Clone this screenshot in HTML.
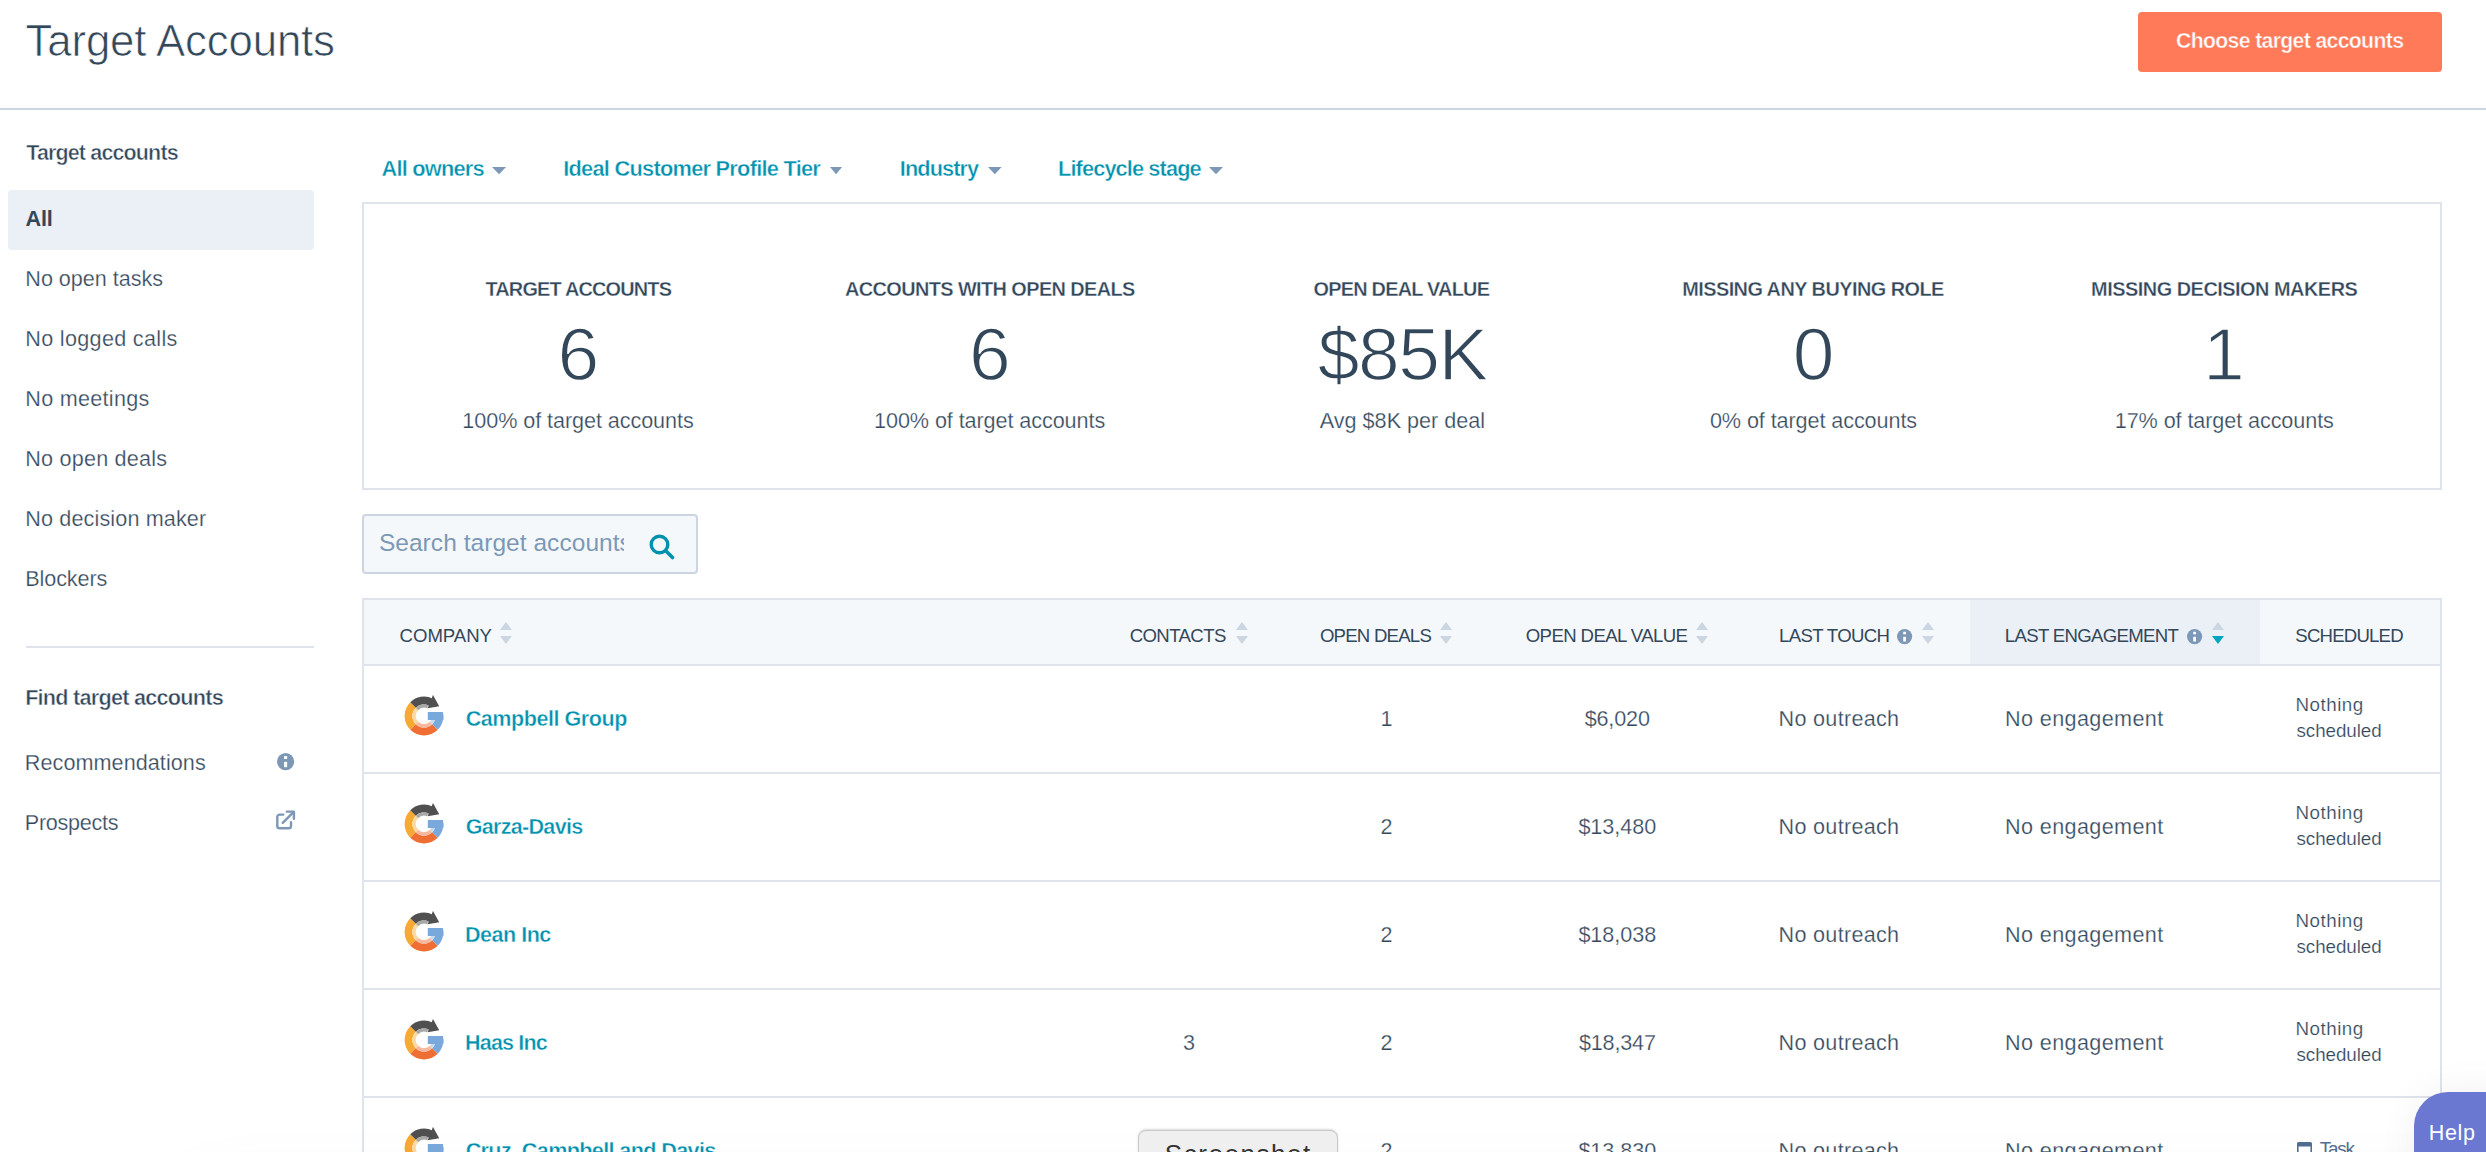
<!DOCTYPE html>
<html><head><meta charset="utf-8"><title>Target Accounts</title>
<style>
html,body{margin:0;padding:0;}
body{width:2486px;height:1152px;overflow:hidden;position:relative;background:#fff;font-family:"Liberation Sans",sans-serif;color:#33475b;}
.t{position:absolute;white-space:nowrap;}
.r{position:absolute;}
svg.r{overflow:visible;}
</style></head><body>
<div class="t" style="left:25.51px;top:18.72px;font-size:43.8px;line-height:43.8px;letter-spacing:-0.151px;color:#33475b;-webkit-text-stroke:0.7px #fff;">Target Accounts</div>
<div class="r" style="left:2138px;top:12px;width:304px;height:60px;background:#ff7a59;border-radius:4px;"></div>
<div class="t" style="left:2176.05px;top:30.35px;font-size:21.2px;line-height:21.2px;font-weight:700;letter-spacing:-0.642px;color:#ffffff;-webkit-text-stroke:0.4px #ff7a59;">Choose target accounts</div>
<div class="r" style="left:0px;top:108px;width:2486px;height:2px;background:#cbd6e2;"></div>
<div class="t" style="left:26.23px;top:142.80px;font-size:21.5px;line-height:21.5px;font-weight:700;letter-spacing:-0.860px;color:#33475b;-webkit-text-stroke:0.5px #fff;">Target accounts</div>
<div class="r" style="left:8px;top:190px;width:306px;height:60px;background:#eaf0f6;border-radius:4px;"></div>
<div class="t" style="left:25.46px;top:208.02px;font-size:21.6px;line-height:21.6px;font-weight:700;letter-spacing:-0.171px;color:#33475b;">All</div>
<div class="t" style="left:25.32px;top:267.92px;font-size:21.6px;line-height:21.6px;letter-spacing:-0.028px;color:#33475b;-webkit-text-stroke:0.25px #fff;">No open tasks</div>
<div class="t" style="left:25.32px;top:327.72px;font-size:21.6px;line-height:21.6px;letter-spacing:0.311px;color:#33475b;-webkit-text-stroke:0.25px #fff;">No logged calls</div>
<div class="t" style="left:25.32px;top:387.92px;font-size:21.6px;line-height:21.6px;letter-spacing:0.275px;color:#33475b;-webkit-text-stroke:0.25px #fff;">No meetings</div>
<div class="t" style="left:25.32px;top:447.72px;font-size:21.6px;line-height:21.6px;letter-spacing:0.201px;color:#33475b;-webkit-text-stroke:0.25px #fff;">No open deals</div>
<div class="t" style="left:25.32px;top:507.82px;font-size:21.6px;line-height:21.6px;letter-spacing:0.129px;color:#33475b;-webkit-text-stroke:0.25px #fff;">No decision maker</div>
<div class="t" style="left:25.32px;top:568.02px;font-size:21.6px;line-height:21.6px;letter-spacing:-0.114px;color:#33475b;-webkit-text-stroke:0.25px #fff;">Blockers</div>
<div class="r" style="left:26px;top:646px;width:288px;height:2px;background:#dfe3eb;"></div>
<div class="t" style="left:25.14px;top:686.93px;font-size:21.7px;line-height:21.7px;font-weight:700;letter-spacing:-0.770px;color:#33475b;-webkit-text-stroke:0.5px #fff;">Find target accounts</div>
<div class="t" style="left:24.82px;top:751.82px;font-size:21.6px;line-height:21.6px;letter-spacing:0.061px;color:#33475b;-webkit-text-stroke:0.25px #fff;">Recommendations</div>
<div class="t" style="left:24.82px;top:812.12px;font-size:21.6px;line-height:21.6px;letter-spacing:-0.291px;color:#33475b;-webkit-text-stroke:0.25px #fff;">Prospects</div>
<svg class="r" style="left:276.9px;top:752.6px" width="17.2" height="17.2" viewBox="0 0 20 20"><circle cx="10" cy="10" r="10" fill="#7c98b6"/><rect x="8.2" y="3.6" width="3.6" height="3.4" fill="#fff"/><rect x="8.2" y="10.3" width="3.6" height="6.2" fill="#fff"/></svg>
<svg class="r" style="left:275px;top:809px" width="21" height="21" viewBox="0 0 21 21" fill="none" stroke="#7c98b6" stroke-width="2.4" stroke-linecap="round" stroke-linejoin="round"><path d="M8.3 5.6 H4.6 a2.3 2.3 0 0 0 -2.3 2.3 V17 a2.3 2.3 0 0 0 2.3 2.3 H13.7 a2.3 2.3 0 0 0 2.3 -2.3 V13.2"/><path d="M7.7 13.9 L18.2 3.4"/><path d="M11.8 2.6 H18.9 V9.7"/></svg>
<div class="t" style="left:381.56px;top:158.45px;font-size:21.8px;line-height:21.8px;font-weight:700;letter-spacing:-0.798px;color:#0091ae;-webkit-text-stroke:0.4px #fff;">All owners</div>
<svg class="r" style="left:491.7px;top:167.2px" width="14.100000000000023" height="7.200000000000017" viewBox="0 0 14 7" preserveAspectRatio="none"><path d="M0 0 H14 L7 7 Z" fill="#7c98b6"/></svg>
<div class="t" style="left:563.23px;top:158.45px;font-size:21.8px;line-height:21.8px;font-weight:700;letter-spacing:-0.745px;color:#0091ae;-webkit-text-stroke:0.4px #fff;">Ideal Customer Profile Tier</div>
<svg class="r" style="left:829.6px;top:167.2px" width="12.100000000000023" height="7.200000000000017" viewBox="0 0 14 7" preserveAspectRatio="none"><path d="M0 0 H14 L7 7 Z" fill="#7c98b6"/></svg>
<div class="t" style="left:899.83px;top:158.45px;font-size:21.8px;line-height:21.8px;font-weight:700;letter-spacing:-0.960px;color:#0091ae;-webkit-text-stroke:0.4px #fff;">Industry</div>
<svg class="r" style="left:988px;top:167.2px" width="13.600000000000023" height="7.200000000000017" viewBox="0 0 14 7" preserveAspectRatio="none"><path d="M0 0 H14 L7 7 Z" fill="#7c98b6"/></svg>
<div class="t" style="left:1058.03px;top:158.45px;font-size:21.8px;line-height:21.8px;font-weight:700;letter-spacing:-0.902px;color:#0091ae;-webkit-text-stroke:0.4px #fff;">Lifecycle stage</div>
<svg class="r" style="left:1209px;top:167.2px" width="14" height="7.200000000000017" viewBox="0 0 14 7" preserveAspectRatio="none"><path d="M0 0 H14 L7 7 Z" fill="#7c98b6"/></svg>
<div class="r" style="left:362px;top:202px;width:2080px;height:288px;background:#ffffff;border:2px solid #dfe3eb;box-sizing:border-box;"></div>
<div class="t" style="left:485.45px;top:280.35px;font-size:19.9px;line-height:19.9px;font-weight:700;letter-spacing:-0.804px;color:#33475b;-webkit-text-stroke:0.3px #fff;">TARGET ACCOUNTS</div>
<div class="t" style="left:557.41px;top:317.31px;font-size:75px;line-height:75px;color:#33475b;-webkit-text-stroke:1.4px #fff;">6</div>
<div class="t" style="left:462.33px;top:409.72px;font-size:21.6px;line-height:21.6px;letter-spacing:-0.067px;color:#33475b;-webkit-text-stroke:0.25px #fff;">100% of target accounts</div>
<div class="t" style="left:844.95px;top:280.35px;font-size:19.9px;line-height:19.9px;font-weight:700;letter-spacing:-0.584px;color:#33475b;-webkit-text-stroke:0.3px #fff;">ACCOUNTS WITH OPEN DEALS</div>
<div class="t" style="left:969.01px;top:317.31px;font-size:75px;line-height:75px;color:#33475b;-webkit-text-stroke:1.4px #fff;">6</div>
<div class="t" style="left:874.08px;top:409.72px;font-size:21.6px;line-height:21.6px;letter-spacing:-0.081px;color:#33475b;-webkit-text-stroke:0.25px #fff;">100% of target accounts</div>
<div class="t" style="left:1313.55px;top:280.35px;font-size:19.9px;line-height:19.9px;font-weight:700;letter-spacing:-0.769px;color:#33475b;-webkit-text-stroke:0.3px #fff;">OPEN DEAL VALUE</div>
<div class="t" style="left:1317.70px;top:317.31px;font-size:75px;line-height:75px;letter-spacing:-1.413px;color:#33475b;-webkit-text-stroke:1.4px #fff;">$85K</div>
<div class="t" style="left:1319.80px;top:409.72px;font-size:21.6px;line-height:21.6px;color:#33475b;-webkit-text-stroke:0.25px #fff;">Avg $8K per deal</div>
<div class="t" style="left:1682.16px;top:280.35px;font-size:19.9px;line-height:19.9px;font-weight:700;letter-spacing:-0.540px;color:#33475b;-webkit-text-stroke:0.3px #fff;">MISSING ANY BUYING ROLE</div>
<div class="t" style="left:1792.69px;top:317.31px;font-size:75px;line-height:75px;color:#33475b;-webkit-text-stroke:1.4px #fff;">0</div>
<div class="t" style="left:1709.94px;top:409.72px;font-size:21.6px;line-height:21.6px;letter-spacing:-0.085px;color:#33475b;-webkit-text-stroke:0.25px #fff;">0% of target accounts</div>
<div class="t" style="left:2091.11px;top:280.35px;font-size:19.9px;line-height:19.9px;font-weight:700;letter-spacing:-0.487px;color:#33475b;-webkit-text-stroke:0.3px #fff;">MISSING DECISION MAKERS</div>
<div class="t" style="left:2202.96px;top:317.31px;font-size:75px;line-height:75px;color:#33475b;-webkit-text-stroke:1.4px #fff;">1</div>
<div class="t" style="left:2114.78px;top:409.72px;font-size:21.6px;line-height:21.6px;letter-spacing:-0.085px;color:#33475b;-webkit-text-stroke:0.25px #fff;">17% of target accounts</div>
<div class="r" style="left:362px;top:514px;width:336px;height:60px;background:#f5f8fa;border:2px solid #cbd6e2;border-radius:4px;box-sizing:border-box;"></div>
<div class="r" style="left:378px;top:520px;width:246px;height:48px;overflow:hidden">
<div class="t" style="left:0.90px;top:11.26px;font-size:24.5px;line-height:24.5px;letter-spacing:0.047px;color:#7c98b6;">Search target accounts</div>
</div>
<svg class="r" style="left:647.7px;top:532.8px" width="28" height="28" viewBox="0 0 28 28"><circle cx="11.5" cy="11.5" r="8.3" fill="none" stroke="#0091ae" stroke-width="3.4"/><path d="M18 18 L24.5 24.5" stroke="#0091ae" stroke-width="3.6" stroke-linecap="round"/></svg>
<div class="r" style="left:362px;top:598px;width:2080px;height:554px;background:#ffffff;border:2px solid #dfe3eb;border-bottom:none;box-sizing:border-box;"></div>
<div class="r" style="left:364px;top:600px;width:2076px;height:64px;background:#f5f8fa;"></div>
<div class="r" style="left:1970px;top:600px;width:290px;height:64px;background:#eaf0f6;"></div>
<div class="r" style="left:364px;top:664px;width:2076px;height:2px;background:#dfe3eb;"></div>
<div class="t" style="left:399.57px;top:627.06px;font-size:18.6px;line-height:18.6px;letter-spacing:-0.038px;color:#33475b;">COMPANY</div>
<svg class="r" style="left:500px;top:622px" width="12" height="22" viewBox="0 0 12 22"><path d="M6 0 L12 8 H0 Z" fill="#cbd6e2"/><path d="M0 14 H12 L6 22 Z" fill="#cbd6e2"/></svg>
<div class="t" style="left:1129.67px;top:627.06px;font-size:18.6px;line-height:18.6px;letter-spacing:-0.605px;color:#33475b;">CONTACTS</div>
<svg class="r" style="left:1235.5px;top:622px" width="12" height="22" viewBox="0 0 12 22"><path d="M6 0 L12 8 H0 Z" fill="#cbd6e2"/><path d="M0 14 H12 L6 22 Z" fill="#cbd6e2"/></svg>
<div class="t" style="left:1319.92px;top:627.06px;font-size:18.6px;line-height:18.6px;letter-spacing:-0.770px;color:#33475b;">OPEN DEALS</div>
<svg class="r" style="left:1440px;top:622px" width="12" height="22" viewBox="0 0 12 22"><path d="M6 0 L12 8 H0 Z" fill="#cbd6e2"/><path d="M0 14 H12 L6 22 Z" fill="#cbd6e2"/></svg>
<div class="t" style="left:1525.72px;top:627.06px;font-size:18.6px;line-height:18.6px;letter-spacing:-0.592px;color:#33475b;">OPEN DEAL VALUE</div>
<svg class="r" style="left:1696px;top:622px" width="12" height="22" viewBox="0 0 12 22"><path d="M6 0 L12 8 H0 Z" fill="#cbd6e2"/><path d="M0 14 H12 L6 22 Z" fill="#cbd6e2"/></svg>
<div class="t" style="left:1778.97px;top:627.06px;font-size:18.6px;line-height:18.6px;letter-spacing:-0.638px;color:#33475b;">LAST TOUCH</div>
<svg class="r" style="left:1896.9px;top:629.1999999999999px" width="15.2" height="15.2" viewBox="0 0 20 20"><circle cx="10" cy="10" r="10" fill="#7c98b6"/><rect x="8.2" y="3.6" width="3.6" height="3.4" fill="#fff"/><rect x="8.2" y="10.3" width="3.6" height="6.2" fill="#fff"/></svg>
<svg class="r" style="left:1922px;top:622px" width="12" height="22" viewBox="0 0 12 22"><path d="M6 0 L12 8 H0 Z" fill="#cbd6e2"/><path d="M0 14 H12 L6 22 Z" fill="#cbd6e2"/></svg>
<div class="t" style="left:2004.87px;top:627.06px;font-size:18.6px;line-height:18.6px;letter-spacing:-0.691px;color:#33475b;">LAST ENGAGEMENT</div>
<svg class="r" style="left:2186.7000000000003px;top:629.1999999999999px" width="15.2" height="15.2" viewBox="0 0 20 20"><circle cx="10" cy="10" r="10" fill="#7c98b6"/><rect x="8.2" y="3.6" width="3.6" height="3.4" fill="#fff"/><rect x="8.2" y="10.3" width="3.6" height="6.2" fill="#fff"/></svg>
<svg class="r" style="left:2212px;top:622px" width="12" height="22" viewBox="0 0 12 22"><path d="M6 0 L12 8 H0 Z" fill="#cbd6e2"/><path d="M0 14 H12 L6 22 Z" fill="#00a4bd"/></svg>
<div class="t" style="left:2295.36px;top:627.06px;font-size:18.6px;line-height:18.6px;letter-spacing:-0.799px;color:#33475b;">SCHEDULED</div>
<svg class="r" style="left:402.6px;top:695.3px" width="42" height="42" viewBox="-21 -21 42 42"><path d="M-13.72 13.72 A19.4 19.4 0 0 1 -13.72 -13.72 L-8.20 -8.20 A11.6 11.6 0 0 0 -8.20 8.20 Z" fill="#f6a933"/><path d="M-8.20 8.20 A11.6 11.6 0 0 1 -8.20 -8.20 L-5.87 -5.87 A8.3 8.3 0 0 0 -5.87 5.87 Z" fill="#fbd9a0"/><path d="M13.72 13.72 A19.4 19.4 0 0 1 -13.72 13.72 L-8.20 8.20 A11.6 11.6 0 0 0 8.20 8.20 Z" fill="#ee6e33"/><path d="M8.20 8.20 A11.6 11.6 0 0 1 -8.20 8.20 L-5.87 5.87 A8.3 8.3 0 0 0 5.87 5.87 Z" fill="#f6b99d"/><path d="M19.37 -1.02 A19.4 19.4 0 0 1 13.72 13.72 L8.20 8.20 A11.6 11.6 0 0 0 11.58 -0.61 Z" fill="#79a9dc"/><path d="M11.42 2.01 A11.6 11.6 0 0 1 8.20 8.20 L5.87 5.87 A8.3 8.3 0 0 0 8.17 1.44 Z" fill="#c4dbf1"/><path d="M3.8 -4 H18.98 L19.40 0 L19.40 4 H3.8 Z" fill="#79a9dc"/><path d="M-13.72 -13.72 A19.4 19.4 0 0 1 8.81 -17.29 L5.27 -10.34 A11.6 11.6 0 0 0 -8.20 -8.20 Z" fill="#505050"/><path d="M-8.20 -8.20 A11.6 11.6 0 0 1 4.35 -10.76 L3.11 -7.70 A8.3 8.3 0 0 0 -5.87 -5.87 Z" fill="#a8a8a8"/><path d="M9 -20.9 L15.2 -9.8 L3.6 -7.8 Z" fill="#505050"/></svg>
<div class="t" style="left:465.64px;top:707.92px;font-size:21.6px;line-height:21.6px;font-weight:700;letter-spacing:-0.474px;color:#0091ae;-webkit-text-stroke:0.4px #fff;">Campbell Group</div>
<div class="t" style="left:1336.60px;width:100px;text-align:center;top:707.92px;font-size:21.6px;line-height:21.6px;color:#33475b;-webkit-text-stroke:0.25px #fff;">1</div>
<div class="t" style="left:1584.63px;top:707.92px;font-size:21.6px;line-height:21.6px;letter-spacing:-0.143px;color:#33475b;-webkit-text-stroke:0.25px #fff;">$6,020</div>
<div class="t" style="left:1778.62px;top:707.92px;font-size:21.6px;line-height:21.6px;letter-spacing:0.282px;color:#33475b;-webkit-text-stroke:0.25px #fff;">No outreach</div>
<div class="t" style="left:2005.12px;top:707.92px;font-size:21.6px;line-height:21.6px;letter-spacing:0.363px;color:#33475b;-webkit-text-stroke:0.25px #fff;">No engagement</div>
<div class="t" style="left:2295.55px;top:695.99px;font-size:18.8px;line-height:18.8px;letter-spacing:0.477px;color:#33475b;-webkit-text-stroke:0.2px #fff;">Nothing</div>
<div class="t" style="left:2296.48px;top:721.99px;font-size:18.8px;line-height:18.8px;letter-spacing:-0.061px;color:#33475b;-webkit-text-stroke:0.2px #fff;">scheduled</div>
<div class="r" style="left:364px;top:772px;width:2076px;height:2px;background:#dfe3eb;"></div>
<svg class="r" style="left:402.6px;top:803.3px" width="42" height="42" viewBox="-21 -21 42 42"><path d="M-13.72 13.72 A19.4 19.4 0 0 1 -13.72 -13.72 L-8.20 -8.20 A11.6 11.6 0 0 0 -8.20 8.20 Z" fill="#f6a933"/><path d="M-8.20 8.20 A11.6 11.6 0 0 1 -8.20 -8.20 L-5.87 -5.87 A8.3 8.3 0 0 0 -5.87 5.87 Z" fill="#fbd9a0"/><path d="M13.72 13.72 A19.4 19.4 0 0 1 -13.72 13.72 L-8.20 8.20 A11.6 11.6 0 0 0 8.20 8.20 Z" fill="#ee6e33"/><path d="M8.20 8.20 A11.6 11.6 0 0 1 -8.20 8.20 L-5.87 5.87 A8.3 8.3 0 0 0 5.87 5.87 Z" fill="#f6b99d"/><path d="M19.37 -1.02 A19.4 19.4 0 0 1 13.72 13.72 L8.20 8.20 A11.6 11.6 0 0 0 11.58 -0.61 Z" fill="#79a9dc"/><path d="M11.42 2.01 A11.6 11.6 0 0 1 8.20 8.20 L5.87 5.87 A8.3 8.3 0 0 0 8.17 1.44 Z" fill="#c4dbf1"/><path d="M3.8 -4 H18.98 L19.40 0 L19.40 4 H3.8 Z" fill="#79a9dc"/><path d="M-13.72 -13.72 A19.4 19.4 0 0 1 8.81 -17.29 L5.27 -10.34 A11.6 11.6 0 0 0 -8.20 -8.20 Z" fill="#505050"/><path d="M-8.20 -8.20 A11.6 11.6 0 0 1 4.35 -10.76 L3.11 -7.70 A8.3 8.3 0 0 0 -5.87 -5.87 Z" fill="#a8a8a8"/><path d="M9 -20.9 L15.2 -9.8 L3.6 -7.8 Z" fill="#505050"/></svg>
<div class="t" style="left:465.64px;top:815.92px;font-size:21.6px;line-height:21.6px;font-weight:700;letter-spacing:-0.722px;color:#0091ae;-webkit-text-stroke:0.4px #fff;">Garza-Davis</div>
<div class="t" style="left:1336.60px;width:100px;text-align:center;top:815.92px;font-size:21.6px;line-height:21.6px;color:#33475b;-webkit-text-stroke:0.25px #fff;">2</div>
<div class="t" style="left:1578.38px;top:815.92px;font-size:21.6px;line-height:21.6px;letter-spacing:-0.034px;color:#33475b;-webkit-text-stroke:0.25px #fff;">$13,480</div>
<div class="t" style="left:1778.62px;top:815.92px;font-size:21.6px;line-height:21.6px;letter-spacing:0.282px;color:#33475b;-webkit-text-stroke:0.25px #fff;">No outreach</div>
<div class="t" style="left:2005.12px;top:815.92px;font-size:21.6px;line-height:21.6px;letter-spacing:0.363px;color:#33475b;-webkit-text-stroke:0.25px #fff;">No engagement</div>
<div class="t" style="left:2295.55px;top:803.99px;font-size:18.8px;line-height:18.8px;letter-spacing:0.477px;color:#33475b;-webkit-text-stroke:0.2px #fff;">Nothing</div>
<div class="t" style="left:2296.48px;top:829.99px;font-size:18.8px;line-height:18.8px;letter-spacing:-0.061px;color:#33475b;-webkit-text-stroke:0.2px #fff;">scheduled</div>
<div class="r" style="left:364px;top:880px;width:2076px;height:2px;background:#dfe3eb;"></div>
<svg class="r" style="left:402.6px;top:911.3px" width="42" height="42" viewBox="-21 -21 42 42"><path d="M-13.72 13.72 A19.4 19.4 0 0 1 -13.72 -13.72 L-8.20 -8.20 A11.6 11.6 0 0 0 -8.20 8.20 Z" fill="#f6a933"/><path d="M-8.20 8.20 A11.6 11.6 0 0 1 -8.20 -8.20 L-5.87 -5.87 A8.3 8.3 0 0 0 -5.87 5.87 Z" fill="#fbd9a0"/><path d="M13.72 13.72 A19.4 19.4 0 0 1 -13.72 13.72 L-8.20 8.20 A11.6 11.6 0 0 0 8.20 8.20 Z" fill="#ee6e33"/><path d="M8.20 8.20 A11.6 11.6 0 0 1 -8.20 8.20 L-5.87 5.87 A8.3 8.3 0 0 0 5.87 5.87 Z" fill="#f6b99d"/><path d="M19.37 -1.02 A19.4 19.4 0 0 1 13.72 13.72 L8.20 8.20 A11.6 11.6 0 0 0 11.58 -0.61 Z" fill="#79a9dc"/><path d="M11.42 2.01 A11.6 11.6 0 0 1 8.20 8.20 L5.87 5.87 A8.3 8.3 0 0 0 8.17 1.44 Z" fill="#c4dbf1"/><path d="M3.8 -4 H18.98 L19.40 0 L19.40 4 H3.8 Z" fill="#79a9dc"/><path d="M-13.72 -13.72 A19.4 19.4 0 0 1 8.81 -17.29 L5.27 -10.34 A11.6 11.6 0 0 0 -8.20 -8.20 Z" fill="#505050"/><path d="M-8.20 -8.20 A11.6 11.6 0 0 1 4.35 -10.76 L3.11 -7.70 A8.3 8.3 0 0 0 -5.87 -5.87 Z" fill="#a8a8a8"/><path d="M9 -20.9 L15.2 -9.8 L3.6 -7.8 Z" fill="#505050"/></svg>
<div class="t" style="left:465.04px;top:923.92px;font-size:21.6px;line-height:21.6px;font-weight:700;letter-spacing:-0.524px;color:#0091ae;-webkit-text-stroke:0.4px #fff;">Dean Inc</div>
<div class="t" style="left:1336.60px;width:100px;text-align:center;top:923.92px;font-size:21.6px;line-height:21.6px;color:#33475b;-webkit-text-stroke:0.25px #fff;">2</div>
<div class="t" style="left:1578.38px;top:923.92px;font-size:21.6px;line-height:21.6px;letter-spacing:-0.016px;color:#33475b;-webkit-text-stroke:0.25px #fff;">$18,038</div>
<div class="t" style="left:1778.62px;top:923.92px;font-size:21.6px;line-height:21.6px;letter-spacing:0.282px;color:#33475b;-webkit-text-stroke:0.25px #fff;">No outreach</div>
<div class="t" style="left:2005.12px;top:923.92px;font-size:21.6px;line-height:21.6px;letter-spacing:0.363px;color:#33475b;-webkit-text-stroke:0.25px #fff;">No engagement</div>
<div class="t" style="left:2295.55px;top:911.99px;font-size:18.8px;line-height:18.8px;letter-spacing:0.477px;color:#33475b;-webkit-text-stroke:0.2px #fff;">Nothing</div>
<div class="t" style="left:2296.48px;top:937.99px;font-size:18.8px;line-height:18.8px;letter-spacing:-0.061px;color:#33475b;-webkit-text-stroke:0.2px #fff;">scheduled</div>
<div class="r" style="left:364px;top:988px;width:2076px;height:2px;background:#dfe3eb;"></div>
<svg class="r" style="left:402.6px;top:1019.3px" width="42" height="42" viewBox="-21 -21 42 42"><path d="M-13.72 13.72 A19.4 19.4 0 0 1 -13.72 -13.72 L-8.20 -8.20 A11.6 11.6 0 0 0 -8.20 8.20 Z" fill="#f6a933"/><path d="M-8.20 8.20 A11.6 11.6 0 0 1 -8.20 -8.20 L-5.87 -5.87 A8.3 8.3 0 0 0 -5.87 5.87 Z" fill="#fbd9a0"/><path d="M13.72 13.72 A19.4 19.4 0 0 1 -13.72 13.72 L-8.20 8.20 A11.6 11.6 0 0 0 8.20 8.20 Z" fill="#ee6e33"/><path d="M8.20 8.20 A11.6 11.6 0 0 1 -8.20 8.20 L-5.87 5.87 A8.3 8.3 0 0 0 5.87 5.87 Z" fill="#f6b99d"/><path d="M19.37 -1.02 A19.4 19.4 0 0 1 13.72 13.72 L8.20 8.20 A11.6 11.6 0 0 0 11.58 -0.61 Z" fill="#79a9dc"/><path d="M11.42 2.01 A11.6 11.6 0 0 1 8.20 8.20 L5.87 5.87 A8.3 8.3 0 0 0 8.17 1.44 Z" fill="#c4dbf1"/><path d="M3.8 -4 H18.98 L19.40 0 L19.40 4 H3.8 Z" fill="#79a9dc"/><path d="M-13.72 -13.72 A19.4 19.4 0 0 1 8.81 -17.29 L5.27 -10.34 A11.6 11.6 0 0 0 -8.20 -8.20 Z" fill="#505050"/><path d="M-8.20 -8.20 A11.6 11.6 0 0 1 4.35 -10.76 L3.11 -7.70 A8.3 8.3 0 0 0 -5.87 -5.87 Z" fill="#a8a8a8"/><path d="M9 -20.9 L15.2 -9.8 L3.6 -7.8 Z" fill="#505050"/></svg>
<div class="t" style="left:465.04px;top:1031.92px;font-size:21.6px;line-height:21.6px;font-weight:700;letter-spacing:-0.868px;color:#0091ae;-webkit-text-stroke:0.4px #fff;">Haas Inc</div>
<div class="t" style="left:1139.00px;width:100px;text-align:center;top:1031.92px;font-size:21.6px;line-height:21.6px;color:#33475b;-webkit-text-stroke:0.25px #fff;">3</div>
<div class="t" style="left:1336.60px;width:100px;text-align:center;top:1031.92px;font-size:21.6px;line-height:21.6px;color:#33475b;-webkit-text-stroke:0.25px #fff;">2</div>
<div class="t" style="left:1578.98px;top:1031.92px;font-size:21.6px;line-height:21.6px;letter-spacing:-0.189px;color:#33475b;-webkit-text-stroke:0.25px #fff;">$18,347</div>
<div class="t" style="left:1778.62px;top:1031.92px;font-size:21.6px;line-height:21.6px;letter-spacing:0.282px;color:#33475b;-webkit-text-stroke:0.25px #fff;">No outreach</div>
<div class="t" style="left:2005.12px;top:1031.92px;font-size:21.6px;line-height:21.6px;letter-spacing:0.363px;color:#33475b;-webkit-text-stroke:0.25px #fff;">No engagement</div>
<div class="t" style="left:2295.55px;top:1019.99px;font-size:18.8px;line-height:18.8px;letter-spacing:0.477px;color:#33475b;-webkit-text-stroke:0.2px #fff;">Nothing</div>
<div class="t" style="left:2296.48px;top:1045.99px;font-size:18.8px;line-height:18.8px;letter-spacing:-0.061px;color:#33475b;-webkit-text-stroke:0.2px #fff;">scheduled</div>
<div class="r" style="left:364px;top:1096px;width:2076px;height:2px;background:#dfe3eb;"></div>
<svg class="r" style="left:402.6px;top:1127.3px" width="42" height="42" viewBox="-21 -21 42 42"><path d="M-13.72 13.72 A19.4 19.4 0 0 1 -13.72 -13.72 L-8.20 -8.20 A11.6 11.6 0 0 0 -8.20 8.20 Z" fill="#f6a933"/><path d="M-8.20 8.20 A11.6 11.6 0 0 1 -8.20 -8.20 L-5.87 -5.87 A8.3 8.3 0 0 0 -5.87 5.87 Z" fill="#fbd9a0"/><path d="M13.72 13.72 A19.4 19.4 0 0 1 -13.72 13.72 L-8.20 8.20 A11.6 11.6 0 0 0 8.20 8.20 Z" fill="#ee6e33"/><path d="M8.20 8.20 A11.6 11.6 0 0 1 -8.20 8.20 L-5.87 5.87 A8.3 8.3 0 0 0 5.87 5.87 Z" fill="#f6b99d"/><path d="M19.37 -1.02 A19.4 19.4 0 0 1 13.72 13.72 L8.20 8.20 A11.6 11.6 0 0 0 11.58 -0.61 Z" fill="#79a9dc"/><path d="M11.42 2.01 A11.6 11.6 0 0 1 8.20 8.20 L5.87 5.87 A8.3 8.3 0 0 0 8.17 1.44 Z" fill="#c4dbf1"/><path d="M3.8 -4 H18.98 L19.40 0 L19.40 4 H3.8 Z" fill="#79a9dc"/><path d="M-13.72 -13.72 A19.4 19.4 0 0 1 8.81 -17.29 L5.27 -10.34 A11.6 11.6 0 0 0 -8.20 -8.20 Z" fill="#505050"/><path d="M-8.20 -8.20 A11.6 11.6 0 0 1 4.35 -10.76 L3.11 -7.70 A8.3 8.3 0 0 0 -5.87 -5.87 Z" fill="#a8a8a8"/><path d="M9 -20.9 L15.2 -9.8 L3.6 -7.8 Z" fill="#505050"/></svg>
<div class="t" style="left:465.64px;top:1139.92px;font-size:21.6px;line-height:21.6px;font-weight:700;letter-spacing:-0.631px;color:#0091ae;-webkit-text-stroke:0.4px #fff;">Cruz, Campbell and Davis</div>
<div class="t" style="left:1336.60px;width:100px;text-align:center;top:1139.92px;font-size:21.6px;line-height:21.6px;color:#33475b;-webkit-text-stroke:0.25px #fff;">2</div>
<div class="t" style="left:1578.38px;top:1139.92px;font-size:21.6px;line-height:21.6px;letter-spacing:-0.034px;color:#33475b;-webkit-text-stroke:0.25px #fff;">$13,830</div>
<div class="t" style="left:1778.62px;top:1139.92px;font-size:21.6px;line-height:21.6px;letter-spacing:0.282px;color:#33475b;-webkit-text-stroke:0.25px #fff;">No outreach</div>
<div class="t" style="left:2005.12px;top:1139.92px;font-size:21.6px;line-height:21.6px;letter-spacing:0.363px;color:#33475b;-webkit-text-stroke:0.25px #fff;">No engagement</div>
<div class="t" style="left:2319.68px;top:1140.09px;font-size:18.8px;line-height:18.8px;letter-spacing:-1.137px;color:#516f90;">Task</div>
<svg class="r" style="left:2297px;top:1142px" width="15" height="16" viewBox="0 0 15 16"><rect x="0.8" y="0.8" width="13.4" height="16" rx="2" fill="none" stroke="#516f90" stroke-width="1.6"/><rect x="0" y="0" width="15" height="4.6" rx="2" fill="#516f90"/></svg>
<div class="r" style="left:130px;top:1185px;width:2530px;height:300px;border-radius:120px;box-shadow:0 0 70px 10px rgba(0,0,0,0.035)"></div>
<div class="r" style="left:1138px;top:1130px;width:200px;height:60px;background:#efefef;border:1px solid #c9c9c9;border-radius:8px;box-sizing:border-box;box-shadow:0 -1px 2px rgba(0,0,0,0.15)"></div>
<div class="t" style="left:1164.83px;top:1140.79px;font-size:26px;line-height:26px;letter-spacing:1.541px;color:#333333;">Screenshot</div>
<div class="r" style="left:2414px;top:1092px;width:120px;height:120px;background:#6a78d1;border-radius:34px;box-shadow:0 0 40px rgba(0,0,0,0.06)"></div>
<div class="t" style="left:2428.73px;top:1122.80px;font-size:21.5px;line-height:21.5px;letter-spacing:0.684px;color:#ffffff;">Help</div>
</body></html>
